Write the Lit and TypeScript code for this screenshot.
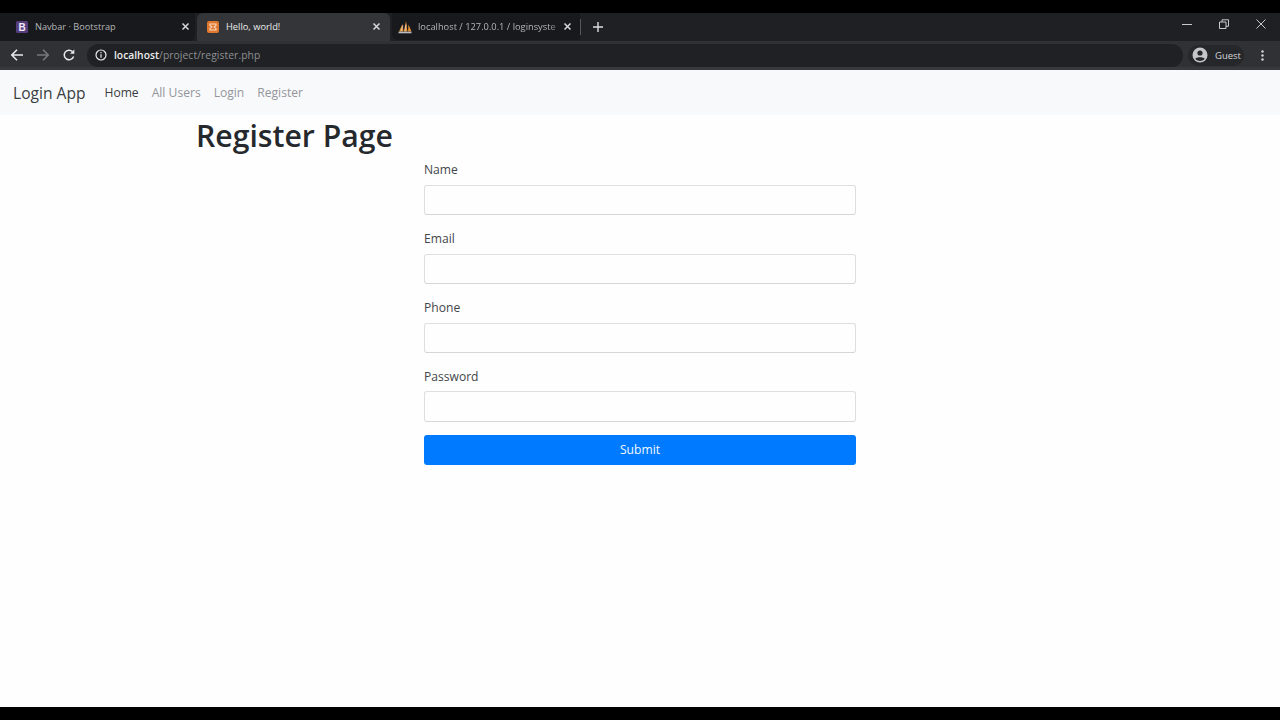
import { LitElement, html, css, svg } from "lit";
import { customElement } from "lit/decorators.js";

const closeIcon = svg`<path d="M1.500 1.500l6 6M7.500 1.500l-6 6" fill="none" stroke="currentColor" stroke-width="1.500"/>`;

@customElement("app-root")
export class AppRoot extends LitElement {
  static styles = css`
    :host { display: flex; flex-direction: column; width: 1280px; height: 720px; overflow: hidden; background: #000; font-family: "Open Sans", "Noto Sans", sans-serif; }
    .letterbox { height: 13px; background: #000; flex: none; }

    .tabstrip { height: 28px; flex: none; background: #1f2023; display: flex; align-items: stretch; color: #b4b6b9; position: relative; }
    .tab { display: flex; align-items: center; font-size: 9.200px; box-sizing: border-box; position: relative; }
    .tab.one { width: 195px; background: #18191c; border-radius: 0 0 6px 0; padding: 0 4.500px 1px 16px; }
    .tab.two { width: 193px; margin-left: 2px; background: #343539; border-radius: 6px 6px 0 0; padding: 0 8px 1px 10px; color: #eceded; font-size: 9.300px; }
    .tab.three { width: 188px; margin-left: 2px; background: #18191c; border-radius: 0 0 0 6px; padding: 0 7px 0 6px; height: 27px; font-size: 9.300px; }
    .tab .ico { width: 12px; height: 12px; flex: none; margin-right: 7px; }
    .tab.three .ico { width: 14px; height: 14px; margin-right: 6px; }
    .tab .title { flex: 1; white-space: nowrap; min-width: 0; }
    .tab.three .title { -webkit-mask-image: linear-gradient(90deg, #000 90%, transparent); mask-image: linear-gradient(90deg, #000 90%, transparent); }
    .tab .x { width: 9px; height: 9px; flex: none; color: #d7d8da; margin-right: 1px; }
    .divider { width: 1px; height: 16px; background: #55565a; align-self: center; flex: none; }
    .plus { width: 12px; height: 12px; margin-left: 11px; align-self: center; color: #dcdddf; flex: none; }
    .winctrls { margin-left: auto; display: flex; align-items: center; color: #c9cacc; gap: 27px; padding: 0 14px 6px 0; }
    .winctrls svg { display: block; }

    .toolbar { height: 29px; flex: none; background: #303134; display: flex; align-items: center; box-sizing: border-box; border-bottom: 3px solid #38393c; padding-top: 2px; }
    .navbtn { width: 14px; height: 14px; flex: none; }
    .back { margin-left: 10px; color: #e8eaed; }
    .fwd { margin-left: 12px; color: #77787b; }
    .reload { margin-left: 12px; color: #e8eaed; }
    .omnibox { margin-left: 11px; width: 1096px; height: 23px; border-radius: 12px; background: #202124; display: flex; align-items: center; flex: none; font-size: 10.300px; color: #8e9093; padding-left: 8px; box-sizing: border-box; }
    .omnibox svg { width: 12px; height: 12px; margin-right: 7px; color: #e8eaed; flex: none; }
    .omnibox b { font-weight: 600; color: #eceded; }
    .omnibox .path { letter-spacing: .08px; }
    .profile { margin-left: 5px; width: 56px; height: 21px; border-radius: 11px; background: #26272a; display: flex; align-items: center; padding-left: 4px; box-sizing: border-box; font-size: 9.500px; color: #d3d4d6; flex: none; }
    .profile svg { width: 16px; height: 16px; margin-right: 7px; flex: none; }
    .kebab { margin-left: 17px; width: 3px; height: 11px; flex: none; }

    .page { flex: 1; min-height: 0; background: #fefefe; display: flex; flex-direction: column; color: #212529; }
    .nav { height: 45px; flex: none; background: #f8f9fb; display: flex; align-items: center; padding-left: 13px; box-sizing: border-box; }
    .brand { font-size: 15.600px; color: #3a3e42; margin-right: 19px; }
    .link { font-size: 12.100px; color: #94969a; margin-right: 13px; }
    .link.active { color: #3a3d40; }
    h1 { margin: 0; padding-left: 196px; font-size: 30.200px; font-weight: 600; line-height: 42px; color: #25292d; height: 42px; }
    form { width: 432px; margin: 2.400px auto 0; display: flex; flex-direction: column; }
    label { display: block; font-size: 12.100px; line-height: 22px; color: #42464a; margin-bottom: 3.600px; }
    .group { margin-bottom: 12.800px; }
    input { display: block; width: 100%; height: 30.400px; box-sizing: border-box; background: #fefefe; border: 1px solid #dcdee0; border-bottom-color: #d4d6d8; border-radius: 3px; padding: 0; margin: 0; }
    button { width: 100%; height: 30.400px; border: 0; border-radius: 3px; background: #007bff; color: #f2f8ff; font: inherit; font-size: 12.100px; padding: 0; }
  `;

  render() {
    return html`
      <div class="letterbox"></div>
      <div class="tabstrip">
        <div class="tab one">
          <svg class="ico" viewBox="0 0 12 12"><rect width="12" height="12" rx="1.500" fill="#563d7c"/><text x="6" y="9.600" text-anchor="middle" font-family="Liberation Sans" font-weight="700" font-size="10" fill="#efe9f7">B</text></svg>
          <span class="title">Navbar · Bootstrap</span>
          <svg class="x" viewBox="0 0 9 9">${closeIcon}</svg>
        </div>
        <div class="tab two">
          <svg class="ico" viewBox="0 0 12 12"><rect width="12" height="12" rx="2" fill="#e0772f"/><path d="M3 3h6v1.500L7 6l2 1.500V9H3V7.500L5 6 3 4.500z" stroke="#fbdcc2" stroke-width="1.100" fill="none"/></svg>
          <span class="title">Hello, world!</span>
          <svg class="x" viewBox="0 0 9 9">${closeIcon}</svg>
        </div>
        <div class="tab three">
          <svg class="ico" viewBox="0 0 14 14"><path d="M1 11.500L4.500 4 5.500 11.500zM5.800 11.500L8 1 9.500 11.500zM10 11.500L10.500 4.500 13.500 11.500z" fill="#e8912f"/><path d="M0.500 12.500h13" stroke="#b9bcc4" stroke-width="1.600"/><path d="M3 11.500L5 5.500M7 11.500l1-7" stroke="#d9dbe0" stroke-width=".700"/></svg>
          <span class="title">localhost / 127.0.0.1 / loginsyste</span>
          <svg class="x" viewBox="0 0 9 9">${closeIcon}</svg>
        </div>
        <div class="divider"></div>
        <svg class="plus" viewBox="0 0 12 12"><path d="M6 1v10M1 6h10" stroke="currentColor" stroke-width="1.400"/></svg>
        <div class="winctrls">
          <svg width="10" height="10" viewBox="0 0 10 10"><path d="M0 5.500h10" stroke="currentColor"/></svg>
          <svg width="10" height="10" viewBox="0 0 10 10"><path d="M.5 3h6.500v6.500H.5zM3 3V.8h6.500v6.500H7" fill="none" stroke="currentColor"/></svg>
          <svg width="10" height="10" viewBox="0 0 10 10"><path d="M.5.500l9 9M9.500.500l-9 9" stroke="currentColor"/></svg>
        </div>
      </div>
      <div class="toolbar">
        <svg class="navbtn back" viewBox="0 0 14 14"><path d="M13 7H2M7 1.800L1.800 7 7 12.200" fill="none" stroke="currentColor" stroke-width="1.600"/></svg>
        <svg class="navbtn fwd" viewBox="0 0 14 14"><path d="M1 7h11M7 1.800L12.200 7 7 12.200" fill="none" stroke="currentColor" stroke-width="1.600"/></svg>
        <svg class="navbtn reload" viewBox="0 0 14 14"><path d="M11.600 8.500A4.800 4.800 0 1 1 10.400 3.500" fill="none" stroke="currentColor" stroke-width="1.500"/><path d="M12.300 1.500v4.300H8z" fill="currentColor"/></svg>
        <div class="omnibox">
          <svg viewBox="0 0 12 12"><circle cx="6" cy="6" r="5" fill="none" stroke="currentColor" stroke-width="1.200"/><path d="M6 5.200v3.500M6 3v1.300" stroke="currentColor" stroke-width="1.200"/></svg>
          <span><b>localhost</b><span class="path">/project/register.php</span></span>
        </div>
        <div class="profile">
          <svg viewBox="0 0 16 16"><circle cx="8" cy="8" r="7.500" fill="#c4c6c9"/><circle cx="8" cy="6" r="2.600" fill="#26272a"/><path d="M3.300 11.800C4.500 9.800 11.500 9.800 12.700 11.800 11.500 13.300 9.800 14 8 14S4.500 13.300 3.300 11.800z" fill="#26272a"/></svg>
          <span>Guest</span>
        </div>
        <svg class="kebab" viewBox="0 0 3 11"><circle cx="1.500" cy="1.500" r="1.200" fill="#d5d6d8"/><circle cx="1.500" cy="5.500" r="1.200" fill="#d5d6d8"/><circle cx="1.500" cy="9.500" r="1.200" fill="#d5d6d8"/></svg>
      </div>
      <div class="page">
        <nav class="nav">
          <span class="brand">Login App</span>
          <span class="link active">Home</span>
          <span class="link">All Users</span>
          <span class="link">Login</span>
          <span class="link">Register</span>
        </nav>
        <h1>Register Page</h1>
        <form @submit=${(e: Event) => e.preventDefault()}>
          ${["Name", "Email", "Phone", "Password"].map(
            (l) => html`<div class="group"><label>${l}</label><input type=${l === "Password" ? "password" : "text"} /></div>`
          )}
          <button type="submit">Submit</button>
        </form>
      </div>
      <div class="letterbox"></div>
    `;
  }
}
